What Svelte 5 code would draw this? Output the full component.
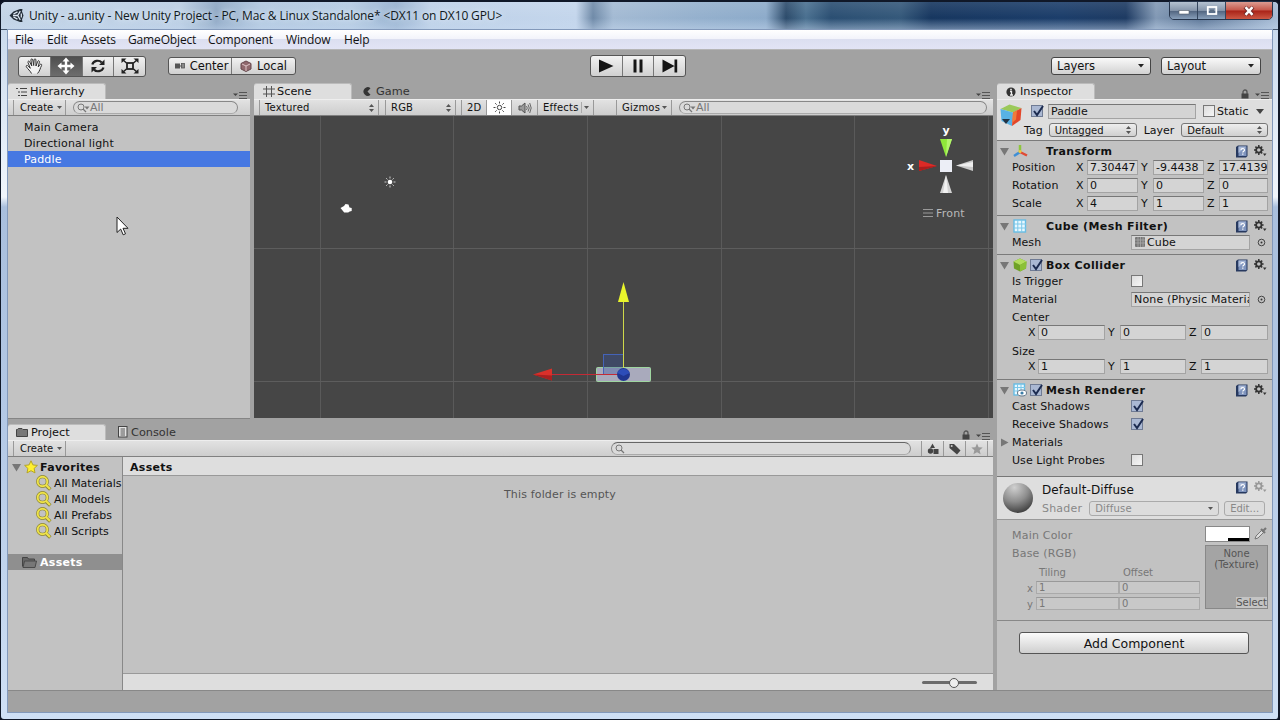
<script>
  const menus = [
    { name: 'File', width: 32 },
    { name: 'Edit', width: 34 },
    { name: 'Assets', width: 47 },
    { name: 'GameObject', width: 80 },
    { name: 'Component', width: 78 },
    { name: 'Window', width: 58 },
    { name: 'Help', width: 40 },
  ];

  const objects = ['Main Camera', 'Directional light', 'Paddle'];
  const favorites = ['All Materials', 'All Models', 'All Prefabs', 'All Scripts'];

  let selected = $state('Paddle');
  let tool = $state('move');

  const transform = [
    { label: 'Position', values: ['7.30447', '-9.4438', '17.4139'] },
    { label: 'Rotation', values: ['0', '0', '0'] },
    { label: 'Scale', values: ['4', '1', '1'] },
  ];
  const axes = ['X', 'Y', 'Z'];
  const gridX = [320.5, 453.5, 587.5, 721.5, 854.5, 988.5];
  const gridY = [248.5, 381.5];
</script>

{#snippet check(on)}
  <span class="check">
    {#if on}
      <svg width="13" height="14" viewBox="0 0 13 14"><path d="M3 7l3 4 6-9" fill="none" stroke="#1c2b50" stroke-width="2" /></svg>
    {/if}
  </span>
{/snippet}

{#snippet updown()}
  <svg class="updown" width="5" height="8" viewBox="0 0 5 8"><path d="M0 3L2.500 0 5 3zM0 5l2.500 3L5 5z" fill="#555" /></svg>
{/snippet}

{#snippet down()}
  <svg class="down" width="5" height="3" viewBox="0 0 5 3"><path d="M0 0h5L2.500 3z" fill="#555" /></svg>
{/snippet}

{#snippet paneMenu(lock)}
  <span class="pane-menu">
    {#if lock}
      <svg width="8" height="10" viewBox="0 0 8 10"><path d="M2 5V3a2 2 0 0 1 4 0v2" fill="none" stroke="#555" stroke-width="1.300" /><rect x="0.500" y="4.500" width="7" height="5" fill="#444" /></svg>
    {/if}
    <svg width="14" height="8" viewBox="0 0 14 8"><path d="M0 2.500h5L2.500 5z" fill="#444" /><path d="M6 1.500h8M6 4.500h8M6 7.500h8" stroke="#555" /></svg>
  </span>
{/snippet}

{#snippet search(text)}
  <span class="search">
    <svg width="13" height="10" viewBox="0 0 13 10"><circle cx="4" cy="4" r="3" fill="none" stroke="#777" /><path d="M6 6l3 3" stroke="#777" stroke-width="1.300" />{#if text}<path d="M7.500 3.500h5L10 6.500z" fill="#777" />{/if}</svg>
    {text}
  </span>
{/snippet}

{#snippet fold(open)}
  <svg class="fold" width="9" height="9" viewBox="0 0 9 9"><path d={open ? 'M0 1h9L4.500 8.500z' : 'M1 0.500l7.500 4L1 8.500z'} fill="#777" /></svg>
{/snippet}

{#snippet helpGear(dim)}
  <span class="help-gear">
    <svg width="13" height="13" viewBox="0 0 13 13"><path d="M1 2l2-1.500h9.500v10.500L11 12.500H1z" fill="#27395f" /><rect x="3.500" y="1.500" width="8" height="9.500" fill="#7f94bd" /><path d="M3.500 1.500h8L3.500 8z" fill="#a9b9d8" /><path d="M6 5c0-2 3.500-2 3.500 0 0 1.300-1.700 1-1.700 2.500M7.800 8.500v1.200" fill="none" stroke="#fff" stroke-width="1.200" /></svg>
    <svg class:dim width="13" height="12" viewBox="0 0 13 12"><circle cx="4.800" cy="5" r="2.700" fill="none" stroke="#333" stroke-width="1.800" /><path d="M4.800 0v2M4.800 8v2M0 5h2M7.600 5h2M1.400 1.600l1.300 1.300M6.900 7.100l1.300 1.300M8.200 1.600L6.900 2.900M2.700 7.100L1.400 8.400" stroke="#333" stroke-width="1.500" /><path d="M9 8.500h3.500L10.700 11z" fill="#333" /></svg>
  </span>
{/snippet}

{#snippet vector(values)}
  <div class="vector">
    {#each axes as axis, i}
      <span class="axis">{axis}</span><span class="field">{values[i]}</span>
    {/each}
  </div>
{/snippet}

{#snippet picker()}
  <svg class="picker" width="9" height="9" viewBox="0 0 9 9"><circle cx="4.500" cy="4.500" r="3.300" fill="none" stroke="#444" /><circle cx="4.500" cy="4.500" r="1" fill="#333" /></svg>
{/snippet}

<div class="window">
  <header class="titlebar">
    <svg class="logo" width="15" height="15" viewBox="0 0 15 15">
      <path d="M0.500 7.500L4.500 3.500 11 1l2.500 0-0.500 2.500L14.500 7.500 13 11.500l0.500 2.500-2.500 0L4.500 11.500z" fill="#222d38" />
      <path d="M4 7.500h4.700M8.700 7.500L11.300 3.200M8.700 7.500l2.600 4.300M4.500 6L8.500 3.900M4.500 9l4 2.100M12.300 5.500v4" stroke="#dde8f3" stroke-width="1.300" />
    </svg>
    <h1>Unity - a.unity - New Unity Project - PC, Mac &amp; Linux Standalone* &lt;DX11 on DX10 GPU&gt;</h1>
    <div class="controls">
      <span><svg width="12" height="9" viewBox="0 0 12 9"><rect x="1" y="4.500" width="10" height="3.500" fill="#fff" stroke="#56606c" stroke-width=".6" /></svg></span>
      <span><svg width="12" height="9" viewBox="0 0 12 9"><rect x="1.800" y="1" width="8.500" height="7" fill="none" stroke="#fff" stroke-width="1.800" /><rect x="4" y="3.500" width="4" height="2.500" fill="#5d6f85" /></svg></span>
      <span class="close"><svg width="12" height="10" viewBox="0 0 12 10"><path d="M2 1l8 8M10 1L2 9" stroke="#6b2525" stroke-width="4" /><path d="M2.500 1.200l7 7.600M9.500 1.200l-7 7.600" stroke="#fff" stroke-width="2.500" /></svg></span>
    </div>
  </header>

  <main class="client">
    <nav class="menubar">
      {#each menus as menu}
        <span style:width="{menu.width}px">{menu.name}</span>
      {/each}
    </nav>

    <div class="toolbar">
      <div class="group tools">
        <button class:active={tool === 'hand'} onclick={() => (tool = 'hand')} aria-label="hand">
          <svg width="18" height="18" viewBox="0 0 18 18"><path d="M6.500 16.500C5.500 14 2.500 12 1.300 9.700c-.5-1.300 1-1.800 1.900-.7L5.300 11.300 3 5.500c-.5-1.600 1.200-1.900 1.700-.6L6.800 9 5.900 3c0-1.500 1.700-1.500 1.900 0L8.700 8.500l.4-5.700c.2-1.400 1.800-1.200 1.800.2L11 9l1.700-4.600c.6-1.300 2-.7 1.700.7L13.200 10l1.900-2.500c.8-1 2 0 1.500 1-1.500 2.500-1.600 5.500-4.100 8" fill="#f2f2f2" stroke="#333" /></svg>
        </button>
        <button class:active={tool === 'move'} onclick={() => (tool = 'move')} aria-label="move">
          <svg width="18" height="18" viewBox="0 0 18 18"><path d="M9 0.500l3.500 4h-2.300v3.300h3.300V5.500l4 3.500-4 3.500v-2.300h-3.300v3.300h2.300L9 17.500l-3.500-4h2.300v-3.300H4.500v2.300L0.500 9l4-3.500v2.300h3.300V4.500H5.500z" fill="#fff" /></svg>
        </button>
        <button class:active={tool === 'rotate'} onclick={() => (tool = 'rotate')} aria-label="rotate">
          <svg width="18" height="16" viewBox="0 0 18 16"><path d="M3.300 6.500C4.500 2.500 10 1.500 12.700 4.500M14.500 9.500c-1.300 4-7 5-9.500 2" fill="none" stroke="#222" stroke-width="2.200" /><path d="M15.500 1.500v5.500H10zM2.500 14.500V9H8z" fill="#222" /></svg>
        </button>
        <button class:active={tool === 'scale'} onclick={() => (tool = 'scale')} aria-label="scale">
          <svg width="18" height="16" viewBox="0 0 18 16"><rect x="6" y="5" width="6" height="6" fill="none" stroke="#222" stroke-width="1.800" /><path d="M1.500 1.500l4 3.500M16.500 1.500l-4 3.500M1.500 14.500l4-3.500M16.500 14.500l-4-3.500" stroke="#222" stroke-width="1.500" /><path d="M0.500 0.500h5l-5 4.500zM17.500 0.500h-5l5 4.500zM0.500 15.500h5l-5-4.500zM17.500 15.500h-5l5-4.500z" fill="#222" /></svg>
        </button>
      </div>
      <div class="group pivot">
        <button><svg width="10" height="6" viewBox="0 0 10 6"><rect x="0" y="0.500" width="5" height="5" fill="#555" /><path d="M5 3h2" stroke="#555" /><rect x="6.500" y="0.500" width="3" height="4.500" fill="#888" stroke="#555" stroke-width=".8" /></svg>Center</button>
        <button><svg width="12" height="12" viewBox="0 0 12 12"><path d="M1 3.500L6 1l5 2.500v5.500L6 11.500 1 9z" fill="#90696d" stroke="#66484d" /><path d="M2 4l4 2 4-2M6 6v5" fill="none" stroke="#dec5c8" /></svg>Local</button>
      </div>
      <div class="group play">
        <button aria-label="play"><svg width="16" height="14" viewBox="0 0 16 14"><path d="M1 0.500L15.500 7 1 13.500z" fill="#151515" /></svg></button>
        <button aria-label="pause"><svg width="10" height="14" viewBox="0 0 10 14"><path d="M0.500 0.500h3v13h-3zM6.500 0.500h3v13h-3z" fill="#151515" /></svg></button>
        <button aria-label="step"><svg width="16" height="14" viewBox="0 0 16 14"><path d="M0.500 0.500L12.500 7 0.500 13.500zM12.500 0.500h2.700v13h-2.700z" fill="#151515" /></svg></button>
      </div>
      <div class="selects">
        <button>Layers<svg width="6" height="4" viewBox="0 0 6 4"><path d="M0 0h6L3 3.500z" fill="#222" /></svg></button>
        <button>Layout<svg width="6" height="4" viewBox="0 0 6 4"><path d="M0 0h6L3 3.500z" fill="#222" /></svg></button>
      </div>
    </div>

    <div class="workspace">
      <div class="left">
        <div class="upper">
          <section class="pane hierarchy">
            <div class="tabs">
              <span class="tab on"><svg width="12" height="10" viewBox="0 0 12 10"><path d="M0 1.500h2M4 1.500h7M2 5h2M5 5h6M2 8.500h2M5 8.500h6" stroke="#444" stroke-width="1.200" /></svg>Hierarchy</span>
              {@render paneMenu(false)}
            </div>
            <div class="bar">
              <span class="bar-item create">Create {@render down()}</span>
              {@render search('All')}
            </div>
            <ul class="tree">
              {#each objects as name}
                <li class:selected={selected === name}><button onclick={() => (selected = name)}>{name}</button></li>
              {/each}
            </ul>
          </section>

          <section class="pane scene">
            <div class="tabs">
              <span class="tab on"><svg width="12" height="11" viewBox="0 0 12 11"><path d="M3.500 0v11M8.500 0v11M0 3h12M0 8h12" stroke="#555" /></svg>Scene</span>
              <span class="tab game"><svg width="9" height="9" viewBox="0 0 9 9"><path d="M7.500 1.300A4.200 4.200 0 1 0 7.500 7.700L4.500 4.500z" fill="#333" /></svg>Game</span>
              {@render paneMenu(false)}
            </div>
            <div class="bar">
              <span class="bar-item shading">Textured {@render updown()}</span>
              <span class="bar-item channel">RGB {@render updown()}</span>
              <span class="bar-item twod">2D</span>
              <span class="bar-item sun"><svg width="13" height="13" viewBox="0 0 13 13"><circle cx="6.500" cy="6.500" r="2.200" fill="none" stroke="#444" /><path d="M6.500 0.500v2M6.500 10.500v2M0.500 6.500h2M10.500 6.500h2M2.200 2.200l1.400 1.400M9.400 9.400l1.400 1.400M10.800 2.200L9.400 3.600M3.600 9.400l-1.400 1.400" stroke="#444" /></svg></span>
              <span class="bar-item sound"><svg width="14" height="12" viewBox="0 0 14 12"><path d="M1 4h2.500L7 1v10L3.500 8H1z" fill="#999" stroke="#555" /><path d="M8.500 4q1.500 2 0 4M10 2.500q2.500 3.500 0 7M11.700 1q3 5 0 10" fill="none" stroke="#666" /></svg></span>
              <span class="bar-item effects">Effects <i></i>{@render down()}</span>
              <span class="bar-item gizmos">Gizmos {@render down()}</span>
              {@render search('All')}
            </div>
            <svg class="viewport" width="739" height="302" viewBox="254 116 739 302">
              <rect x="254" y="116" width="739" height="302" fill="#464646" />
              {#each gridX as x}
                <path d="M{x} 116v302" stroke="#5a5a5a" />
              {/each}
              {#each gridY as y}
                <path d="M254 {y}h739" stroke="#5d5d5d" />
              {/each}
              <circle cx="390" cy="182" r="2.300" fill="#fff" />
              <path d="M390 176.500v2M390 185.500v2M384.500 182h2M393.500 182h2M386.200 178.200l1.300 1.300M392.500 184.500l1.300 1.300M393.800 178.200l-1.300 1.300M387.500 184.500l-1.300 1.300" stroke="#ccc" />
              <path d="M340.500 208l3.500-2 1.500-2 3 .5 1 3 2.200.5v3l-2 .5-1.500 1h-4z" fill="#fff" />
              <!-- move gizmo on the paddle -->
              <rect x="596.500" y="367.500" width="54" height="14" rx="1" fill="#a9aabc" stroke="#9fd6a0" />
              <rect x="603.500" y="354.500" width="20" height="20" fill="#3550a0" fill-opacity=".35" stroke="#4463b8" />
              <path d="M552 374.500h66" stroke="#c42a35" />
              <path d="M623.500 302v66" stroke="#cfd84a" />
              <path d="M533 374.500l19-6v12z" fill="#d9302a" />
              <path d="M533 374.500l19 1v5z" fill="#a82020" />
              <path d="M623.500 282l5.500 20h-11z" fill="#e9f52b" />
              <circle cx="623.500" cy="374.500" r="6.500" fill="#20368f" />
              <path d="M617.500 373a6.500 6.500 0 0 1 12 0l-6 3z" fill="#2d4db8" />
              <!-- orientation gizmo -->
              <rect x="940" y="160" width="12" height="12" fill="#eceef6" />
              <path d="M940 139h12l-6 18z" fill="#8fe83a" />
              <path d="M947 139h5l-6 18z" fill="#b3f56c" />
              <path d="M919 160v11l18-5z" fill="#dc2a26" />
              <path d="M919 167l18-1-18 5z" fill="#aa1d1d" />
              <path d="M973 160v11l-17-5.500z" fill="#c9c9c9" />
              <path d="M973 162v5l-17-1.500z" fill="#eee" />
              <path d="M946 175l6 18h-12z" fill="#d2d2d2" />
              <path d="M946 175l2 18h-5z" fill="#f1f1f1" />
              <text x="942.500" y="134" class="axis-name">y</text>
              <text x="907" y="170" class="axis-name">x</text>
              <path d="M923 209.500h10M923 213h10M923 216.500h10" stroke="#999" />
              <text x="936" y="217" class="view-name">Front</text>
            </svg>
          </section>
        </div>

        <section class="pane project">
          <div class="tabs">
            <span class="tab on"><svg width="12" height="9" viewBox="0 0 12 9"><path d="M0.500 8.500v-7h1l.8-1H6l1 1h4.500v7z" fill="#777" stroke="#444" /></svg>Project</span>
            <span class="tab console"><svg width="10" height="12" viewBox="0 0 10 12"><rect x="0.500" y="0.500" width="8.500" height="10.500" fill="#e3e3e3" stroke="#444" /><path d="M2.500 3h4.500M2.500 5h4.500M2.500 7h4.500M2.500 9h4.500" stroke="#555" /></svg>Console</span>
            {@render paneMenu(true)}
          </div>
          <div class="bar">
            <span class="bar-item create">Create {@render down()}</span>
            {@render search('')}
            <span class="bar-item filter"><svg width="12" height="12" viewBox="0 0 12 12"><path d="M5.500 0.500l2.500 4.500H3z" fill="#444" /><circle cx="3.500" cy="8" r="2.700" fill="#444" /><rect x="6.500" y="6" width="5" height="5" fill="#444" /></svg></span>
            <span class="bar-item filter"><svg width="12" height="12" viewBox="0 0 12 12"><path d="M0.500 1h4.500l6.500 6.500L8 11.500 0.500 5z" fill="#444" /><circle cx="2.700" cy="3" r="1" fill="#ccc" /></svg></span>
            <span class="bar-item filter last"><svg width="12" height="12" viewBox="0 0 12 12"><path d="M6 0.500l1.600 3.800 4.100.3-3.100 2.700 1 4L6 9.200 2.400 11.300l1-4L.3 4.600l4.100-.3z" fill="#999" /></svg></span>
          </div>
          <div class="browser">
            <div class="folders">
              <div class="folder-row root">
                {@render fold(true)}
                <svg width="14" height="14" viewBox="0 0 14 14"><path d="M7 0.800l1.900 4.100 4.500.5-3.300 3 .9 4.500L7 10.700l-4 2.200.9-4.500-3.300-3 4.500-.5z" fill="#fff031" stroke="#b5a526" /></svg>
                <b>Favorites</b>
              </div>
              {#each favorites as name}
                <div class="folder-row fav">
                  <svg width="17" height="16" viewBox="0 0 17 16"><circle cx="7.500" cy="6.500" r="4.800" fill="none" stroke="#8b8531" stroke-width="3.200" /><path d="M11 10.500l4.300 4" stroke="#8b8531" stroke-width="3.600" /><circle cx="7.500" cy="6.500" r="4.800" fill="none" stroke="#eee24a" stroke-width="1.900" /><path d="M11 10l4 4" stroke="#eee24a" stroke-width="2.200" /></svg>
                  {name}
                </div>
              {/each}
              <div class="folder-row assets">
                <svg width="15" height="12" viewBox="0 0 15 12"><path d="M0.500 10.500v-9h5l1 1.500h6v2" fill="#666" stroke="#444" /><path d="M2.500 5h12l-1.500 6.500h-12z" fill="#777" stroke="#4a4a4a" /></svg>
                <b>Assets</b>
              </div>
            </div>
            <div class="contents">
              <div class="crumb">Assets</div>
              <p>This folder is empty</p>
              <div class="zoom"><span class="track"><span class="knob"></span></span></div>
            </div>
          </div>
        </section>
      </div>

      <section class="pane inspector">
        <div class="tabs">
          <span class="tab on"><svg width="10" height="10" viewBox="0 0 10 10"><circle cx="5" cy="5" r="4.600" fill="#333" /><path d="M4 4.500h1.500V8M4 8h3" fill="none" stroke="#eee" stroke-width="1.300" /><rect x="4.200" y="1.800" width="1.600" height="1.500" fill="#eee" /></svg>Inspector</span>
          {@render paneMenu(true)}
        </div>

        <div class="object-head">
          <svg class="cube" width="24" height="24" viewBox="0 0 24 24"><path d="M0.500 5l9-4.500L21.500 4l-8.500 4.500z" fill="#9bc95a" /><path d="M0.500 5L13 8.500 12 22 1.500 17z" fill="#58b2e4" /><path d="M13 8.500L21.500 4l-1 12L12 22z" fill="#e3472a" /><path d="M13 8.500l4-2-1 9-3.500 3z" fill="#f07b3a" /><path d="M2 15h8l-4 5z" fill="#234" /></svg>
          <div class="head-rows">
            <div class="head-row name-row">
              {@render check(true)}
              <span class="field name">Paddle</span>
              {@render check(false)}
              <span class="static">Static</span>
              <svg width="8" height="5" viewBox="0 0 8 5"><path d="M0 0h8L4 5z" fill="#444" /></svg>
            </div>
            <div class="head-row tag-row">
              <span>Tag</span>
              <span class="popup tag">Untagged {@render updown()}</span>
              <span>Layer</span>
              <span class="popup layer">Default {@render updown()}</span>
            </div>
          </div>
        </div>

        <div class="component transform">
          <div class="component-head">
            {@render fold(true)}
            <svg width="15" height="14" viewBox="0 0 15 14"><path d="M7 8V1" stroke="#8fc63d" stroke-width="2.500" /><path d="M7 8l-6 4" stroke="#3f8fd6" stroke-width="2.500" /><path d="M7 8l7 3.500" stroke="#e04a34" stroke-width="2.500" /><circle cx="7" cy="7.500" r="1.600" fill="#eec940" /></svg>
            <h2>Transform</h2>
            {@render helpGear(false)}
          </div>
          {#each transform as row}
            <div class="row"><span class="label">{row.label}</span>{@render vector(row.values)}</div>
          {/each}
        </div>

        <div class="component mesh">
          <div class="component-head">
            {@render fold(true)}
            <svg width="14" height="14" viewBox="0 0 14 14"><rect x="1" y="1" width="11.500" height="12" fill="#e8f8ff" stroke="#66bce4" stroke-width="1.400" /><path d="M4.800 1v12M8.700 1v12M1 5h12M1 9h12" stroke="#7cc8ea" /></svg>
            <h2>Cube (Mesh Filter)</h2>
            {@render helpGear(false)}
          </div>
          <div class="row">
            <span class="label">Mesh</span>
            <span class="field object"><svg width="10" height="10" viewBox="0 0 10 10"><rect width="10" height="10" rx="1" fill="#777" /><path d="M3 0v10M5.500 0v10M8 0v10M0 3h10M0 6h10" stroke="#aaa" stroke-width=".8" /></svg>Cube</span>
            {@render picker()}
          </div>
        </div>

        <div class="component collider">
          <div class="component-head">
            {@render fold(true)}
            <svg width="14" height="14" viewBox="0 0 14 14"><path d="M0.500 3.500L7 0.500l6.500 3-.5 7L7 13.500l-6-3z" fill="#6fa127" /><path d="M0.500 3.500L7 0.500l6.500 3L7 7z" fill="#b2dd5e" /><path d="M7 7l6.500-3.500-.5 7-6 3z" fill="#8cc137" /></svg>
            {@render check(true)}
            <h2>Box Collider</h2>
            {@render helpGear(false)}
          </div>
          <div class="row"><span class="label">Is Trigger</span>{@render check(false)}</div>
          <div class="row"><span class="label">Material</span><span class="field object">None (Physic Material)</span>{@render picker()}</div>
          <div class="row short"><span class="label">Center</span></div>
          <div class="wide">{@render vector(['0', '0', '0'])}</div>
          <div class="row short spaced"><span class="label">Size</span></div>
          <div class="wide">{@render vector(['1', '1', '1'])}</div>
        </div>

        <div class="component renderer">
          <div class="component-head">
            {@render fold(true)}
            <svg width="14" height="14" viewBox="0 0 14 14"><rect x="1" y="1" width="10.500" height="11" fill="#e8f8ff" stroke="#66bce4" stroke-width="1.400" /><path d="M4.500 1v11M8 1v11M1 4.500h11M1 8h11" stroke="#7cc8ea" /><ellipse cx="9" cy="10" rx="4.500" ry="3" fill="#fff" stroke="#678" /><circle cx="9" cy="10" r="1.600" fill="#3c7ea8" /></svg>
            {@render check(true)}
            <h2>Mesh Renderer</h2>
            {@render helpGear(false)}
          </div>
          <div class="row"><span class="label">Cast Shadows</span>{@render check(true)}</div>
          <div class="row"><span class="label">Receive Shadows</span>{@render check(true)}</div>
          <div class="row foldout">{@render fold(false)}<span class="label">Materials</span></div>
          <div class="row"><span class="label">Use Light Probes</span>{@render check(false)}</div>
        </div>

        <div class="material-head">
          <span class="sphere"></span>
          <div class="material-rows">
            <div class="material-title">Default-Diffuse {@render helpGear(true)}</div>
            <div class="material-shader">
              <span>Shader</span>
              <span class="popup">Diffuse {@render down()}</span>
              <span class="popup edit">Edit...</span>
            </div>
          </div>
        </div>

        <div class="material-body">
          <div class="props">
            <div class="prop">Main Color</div>
            <div class="prop">Base (RGB)</div>
            <div class="heads"><span>Tiling</span><span>Offset</span></div>
            <div class="uv"><em>x</em><span class="field">1</span><span class="field">0</span></div>
            <div class="uv"><em>y</em><span class="field">1</span><span class="field">0</span></div>
          </div>
          <div class="slot">
            <div class="color">
              <span class="swatch"><i></i></span>
              <svg width="14" height="14" viewBox="0 0 14 14"><path d="M1 13l1-3 5.500-5.500 2 2L4 12z" fill="#ddd" stroke="#777" /><path d="M7 3l4 4M8.500 5.500L12 2" stroke="#777" stroke-width="2.200" /></svg>
            </div>
            <div class="texture"><span>None<br />(Texture)</span><b>Select</b></div>
          </div>
        </div>

        <button class="add">Add Component</button>
      </section>
    </div>

    <footer class="status"></footer>
  </main>

  <svg class="cursor" width="13" height="20" viewBox="0 0 13 20"><path d="M1 1v15.500l3.700-3.400 2.500 5.700 2.300-1-2.500-5.500H12z" fill="#fff" stroke="#222" /></svg>
</div>

<style>
  :global(body) {
    overflow: hidden;
    background: #0a1020;
  }

  * {
    box-sizing: border-box;
  }

  .window {
    position: relative;
    width: 1280px;
    height: 720px;
    border: 1px solid #101828;
    border-width: 2px 2px 1px 1px;
    border-radius: 6px 6px 4px 4px;
    padding: 0 6px 7px 7px;
    background: linear-gradient(#c3d5ea, #e7eff9 150px, #f0f5fb 195px, #a9bfdd 205px, #b4c9e6 60%, #cfe0f5);
    font-family: 'DejaVu Sans', Verdana, sans-serif;
    font-size: 11px;
    color: #111;
  }

  svg {
    display: block;
    flex: none;
  }

  button {
    font: inherit;
    color: inherit;
    padding: 0;
    border: 0;
    background: none;
  }

  h1, h2, p, ul {
    margin: 0;
    padding: 0;
  }

  .titlebar {
    height: 28px;
    margin: 0 -6px 0 -7px;
    padding-left: 8px;
    display: flex;
    align-items: center;
    border-radius: 5px 5px 0 0;
    background:
      linear-gradient(rgba(255, 255, 255, .1), transparent 60%, rgba(200, 218, 240, .45)),
      linear-gradient(90deg, #c3d4e6, #b9cde3 180px, #8ca6c3 215px, #b0c7e0 260px, #b3cae2 350px, #95b0cf 395px, #bed1e8 430px, #c4d6ec 575px, #6f8aa8 592px, #a3bad3 612px, #94b0cd 700px, #8dabca 765px, #2c4b6b 785px, #4a7090 805px, #2a4e72 830px, #34587a 900px, #16365f 930px, #1b3d6a 1060px, #1d3a62 1125px, #8299b5 1155px, #5b7596 1200px, #a8bdd6);
    border-bottom: 1px solid #43546a;
  }

  h1 {
    margin-left: 5px;
    flex: 1;
    font: 12px/14px 'Open Sans', 'Noto Sans', sans-serif;
    letter-spacing: -.13px;
    color: #101820;
    text-shadow: 0 0 5px #dfeaf5, 0 0 8px #dfeaf5;
    white-space: nowrap;
  }

  .controls {
    display: flex;
    align-self: flex-start;
    height: 19px;
    margin-right: 5px;
    margin-top: -1px;
    border: 1px solid #26354c;
    border-radius: 0 0 5px 5px;
    overflow: hidden;
  }

  .controls span {
    width: 28px;
    display: grid;
    place-items: center;
    border-right: 1px solid #34465e;
    background: linear-gradient(#b5c2d1, #8595aa 50%, #50637e 52%, #889fba);
  }

  .controls .close {
    width: 46px;
    border: 0;
    background: linear-gradient(#dc9c91, #c5574a 48%, #a92318 52%, #cc5844);
  }

  .client {
    height: 682px;
    display: flex;
    flex-direction: column;
    background: #a2a2a2;
    box-shadow: 0 0 0 1px #8399ba;
  }

  .menubar {
    height: 20px;
    padding: 0 0 0 7px;
    display: flex;
    align-items: center;
    background: linear-gradient(#fff, #f3f4fb 45%, #dcdff0 50%, #e2e4f5);
    border-bottom: 1px solid #b5b5b5;
    font: 12px/18px 'Open Sans', 'Noto Sans', sans-serif;
    letter-spacing: -.15px;
  }

  .toolbar {
    height: 33px;
    padding: 0 11px 1px 10px;
    display: flex;
    align-items: center;
  }

  .group {
    display: flex;
    height: 21px;
    border: 1px solid #555;
    border-radius: 3px;
    background: linear-gradient(#f2f2f2, #d0d0d0);
    font-size: 11.500px;
  }

  .group button {
    display: flex;
    align-items: center;
    justify-content: center;
    gap: 5px;
    border-right: 1px solid #777;
  }

  .group button:last-child {
    border-right: 0;
  }

  .tools {
    width: 128px;
  }

  .tools button,
  .play button {
    flex: 1;
  }

  .tools .active {
    background: linear-gradient(#4f4f4f, #6d6d6d);
  }

  .pivot {
    width: 128px;
    margin-left: 22px;
    height: 18px;
  }

  .pivot button {
    width: 64px;
    padding-left: 3px;
  }

  .pivot button:last-child {
    padding-left: 0;
  }

  .play {
    width: 96px;
    margin-left: 294px;
    height: 22px;
  }

  .selects {
    margin-left: auto;
    display: flex;
    gap: 10px;
  }

  .selects button {
    width: 100px;
    height: 18px;
    padding: 0 6px 0 5px;
    display: flex;
    align-items: center;
    justify-content: space-between;
    border: 1px solid #444;
    border-radius: 3px;
    background: linear-gradient(#fafafa, #d2d2d2);
    font-size: 11.500px;
  }

  .workspace {
    height: 607px;
    display: grid;
    grid-template-columns: 985px 275px;
    gap: 4px;
  }

  .left {
    display: grid;
    grid-template-rows: 335px 266px;
    gap: 6px;
  }

  .upper {
    display: grid;
    grid-template-columns: 242px 739px;
    gap: 4px;
  }

  .pane {
    display: flex;
    flex-direction: column;
    background: #c2c2c2;
    min-width: 0;
  }

  .hierarchy,
  .project,
  .inspector {
    box-shadow: 0 1px 0 #858585;
  }

  .tabs {
    height: 16px;
    display: flex;
    background: #a2a2a2;
    font-size: 11.300px;
  }

  .tab {
    display: flex;
    align-items: center;
    gap: 4px;
    padding-left: 10px;
    color: #333;
  }

  .tab.on {
    width: 98px;
    padding-left: 9px;
    border-radius: 3px 3px 0 0;
    border: solid #bbb;
    border-width: 1px 1px 0 0;
    background: #dedede;
    color: #111;
  }

  .hierarchy .tab.on {
    padding-left: 8px;
    gap: 2px;
  }

  .scene .tab.on {
    gap: 2px;
  }

  .scene .game {
    padding-left: 11px;
    gap: 4px;
  }

  .project .console {
    padding-left: 12px;
    gap: 3px;
  }

  .pane-menu {
    margin: 7px 3px 0 auto;
    display: flex;
    align-items: flex-end;
    gap: 6px;
    height: 9px;
  }

  .bar {
    height: 17px;
    display: flex;
    align-items: center;
    padding-left: 5px;
    border-top: 1px solid #eee;
    border-bottom: 1px solid #808080;
    background: linear-gradient(#e2e2e2, #cdcdcd);
  }

  .bar-item {
    height: 100%;
    display: flex;
    align-items: center;
    justify-content: space-between;
    padding: 0 4px 0 5px;
    border: solid #999;
    border-width: 0 1px 0 0;
    font-size: 10px;
    letter-spacing: .2px;
  }

  .create {
    width: 53px;
    border-left-width: 1px;
    padding: 0 3px 0 6px;
    letter-spacing: 0;
  }

  .search {
    flex: 1;
    height: 13px;
    margin: 0 12px 0 7px;
    padding-left: 3px;
    display: flex;
    align-items: center;
    border: 1px solid #888;
    border-bottom-color: #aaa;
    border-radius: 7px;
    background: #dadada;
    color: #777;
  }

  .tree {
    padding-top: 3px;
    list-style: none;
  }

  .tree li {
    height: 16px;
    padding: 1px 0 0 16px;
    line-height: 15px;
    letter-spacing: .15px;
  }

  .tree button {
    display: block;
    letter-spacing: inherit;
  }

  .tree .selected {
    background: #4678e2;
    color: #fff;
  }

  .shading {
    width: 120px;
    border-left-width: 1px;
  }

  .channel {
    width: 71px;
    margin-left: 6px;
    border-left-width: 1px;
  }

  .twod {
    width: 26px;
    margin-left: 5px;
    border-left-width: 1px;
  }

  .sun,
  .sound {
    width: 25px;
    padding: 0;
    justify-content: center;
  }

  .sun {
    background: #fff;
  }

  .sound {
    width: 26px;
  }

  .effects {
    width: 56px;
    gap: 2px;
  }

  .effects i {
    height: 11px;
    border-left: 1px solid #aaa;
  }

  .gizmos {
    width: 56px;
    margin-left: 22px;
    border-left-width: 1px;
  }

  .scene .search {
    margin: 0 6px 0 7px;
  }

  .axis-name {
    font: bold 11px 'DejaVu Sans', sans-serif;
    fill: #fff;
  }

  .view-name {
    font: 11px 'DejaVu Sans', sans-serif;
    letter-spacing: .2px;
    fill: #b9b9b9;
  }

  .project .tab.on {
    padding-left: 8px;
    gap: 3px;
  }

  .project .search {
    margin: 0 10px 0 545px;
    border-color: #666 #888 #aaa;
  }

  .filter {
    width: 22px;
    padding: 0;
    justify-content: center;
    border-width: 0 0 0 1px;
  }

  .last {
    width: 23px;
    margin-right: 5px;
    border-right-width: 1px;
  }

  .browser {
    flex: 1;
    display: grid;
    grid-template-columns: 115px 1fr;
  }

  .folders {
    padding-top: 2px;
    border-right: 1px solid #888;
    overflow: hidden;
  }

  .folder-row {
    height: 16px;
    display: flex;
    align-items: center;
    white-space: nowrap;
  }

  .folder-row b,
  .crumb {
    font-size: 11px;
    font-weight: bold;
    letter-spacing: .3px;
  }

  .root {
    padding-left: 4px;
    gap: 3px;
  }

  .root b {
    margin-left: -1px;
  }

  .fav {
    padding-left: 27px;
    gap: 2px;
  }

  .assets {
    margin-top: 15px;
    padding-left: 14px;
    gap: 3px;
    background: #8f8f8f;
    color: #fff;
  }

  .contents {
    display: flex;
    flex-direction: column;
  }

  .crumb {
    height: 19px;
    padding: 3px 0 0 7px;
    border-bottom: 1px solid #999;
    background: #dedede;
    line-height: 15px;
  }

  .contents p {
    flex: 1;
    padding-top: 12px;
    padding-left: 4px;
    text-align: center;
    color: #555;
    letter-spacing: .15px;
  }

  .zoom {
    height: 17px;
    padding: 7px 16px 0 0;
    display: flex;
    justify-content: flex-end;
    border-top: 1px solid #999;
    background: #dedede;
  }

  .track {
    width: 55px;
    height: 3px;
    display: flex;
    align-items: center;
    justify-content: center;
    border-radius: 2px;
    background: #6b6b6b;
  }

  .knob {
    width: 10px;
    height: 10px;
    margin-left: 8px;
    border: 1px solid #555;
    border-radius: 50%;
    background: #eee;
  }

  .object-head {
    height: 41px;
    padding: 3px 0 0 3px;
    display: flex;
    border-top: 1px solid #eee;
    background: #dedede;
  }

  .cube {
    margin-top: 1px;
  }

  .head-rows {
    flex: 1;
  }

  .head-row {
    display: flex;
    align-items: center;
  }

  .name-row {
    height: 16px;
    padding-left: 7px;
  }

  .name {
    width: 148px;
    margin-left: 5px;
    margin-right: 7px;
  }

  .static {
    margin: 0 8px 0 2px;
  }

  .tag-row {
    height: 22px;
    padding-right: 5px;
    justify-content: flex-end;
    gap: 7px;
  }

  .popup {
    width: 87px;
    height: 14px;
    padding: 0 5px;
    display: flex;
    align-items: center;
    justify-content: space-between;
    border: 1px solid #777;
    border-radius: 3px;
    background: linear-gradient(#eee, #d0d0d0);
    font-size: 10px;
  }

  .tag {
    width: 88px;
    margin-left: -1px;
  }

  .check {
    width: 12px;
    height: 12px;
    flex: none;
    border: 1px solid #777;
    background: linear-gradient(135deg, #ddd, #f6f6f6);
  }

  .check:has(svg) {
    background: #aab8d3;
    border-color: #6f7b94;
  }

  .check svg {
    margin: -2px -1px;
  }

  .field {
    height: 15px;
    padding-left: 2px;
    display: block;
    border: 1px solid #a3a3a3;
    border-top-color: #777;
    background: #d4d4d4;
    line-height: 13px;
    overflow: hidden;
    white-space: nowrap;
  }

  .component {
    padding: 1px 4px 0 3px;
    border-top: 1px solid #7b7b7b;
  }

  .component-head {
    height: 16px;
    display: grid;
    grid-template-columns: 13px 17px 16px 1fr auto;
    align-items: center;
  }

  h2 {
    grid-column: 4;
    padding-top: 2px;
    font-size: 11px;
    line-height: 16px;
    letter-spacing: .4px;
    white-space: nowrap;
  }

  .help-gear {
    display: flex;
    gap: 6px;
    margin-right: 1px;
  }

  .dim {
    opacity: .4;
  }

  .transform {
    height: 75px;
  }

  .mesh {
    height: 39px;
  }

  .collider {
    height: 125px;
  }

  .renderer {
    height: 97px;
  }

  .row {
    height: 18px;
    padding-left: 12px;
    display: flex;
    align-items: center;
    white-space: nowrap;
  }

  .label {
    width: 119px;
    flex: none;
    letter-spacing: .05px;
  }

  .transform .label {
    width: 62px;
  }

  .short {
    height: 17px;
  }

  .short .label {
    padding-top: 1px;
  }

  .spaced {
    margin-top: 1px;
  }

  .vector {
    flex: 1;
    display: grid;
    grid-template-columns: 13px 51px 15px 51px 15px 49px;
    align-items: center;
  }

  .axis {
    padding-left: 2px;
  }

  .vector .axis:nth-of-type(n + 3) {
    padding-left: 3px;
  }

  .wide {
    height: 16px;
    padding-left: 26px;
  }

  .wide .vector {
    grid-template-columns: 12px 67px 15px 66px 15px 67px;
  }

  .object {
    width: 119px;
    margin-right: 7px;
    font-size: 11px;
    letter-spacing: .15px;
  }

  .object svg {
    display: inline-block;
    margin: 0 2px 0 1px;
    vertical-align: -1px;
  }

  .foldout {
    padding-left: 0;
    gap: 3px;
  }

  .material-head {
    height: 44px;
    display: flex;
    padding: 4px 5px 0;
    border: solid #777;
    border-width: 1px 0;
    background: #dedede;
    border-bottom-color: #999;
  }

  .sphere {
    width: 30px;
    height: 30px;
    margin: 2px 0 0 1px;
    border-radius: 50%;
    background: radial-gradient(circle at 38% 15%, #d0d0d0, #8d8d8d 45%, #444 80%, #2c2c2c);
  }

  .material-rows {
    flex: 1;
    padding-left: 9px;
  }

  .material-title {
    height: 17px;
    display: flex;
    justify-content: space-between;
    font-size: 12px;
    line-height: 18px;
    letter-spacing: .1px;
  }

  .material-title .help-gear {
    margin-right: 0;
  }

  .material-shader {
    display: flex;
    align-items: center;
    gap: 7px;
    padding-top: 3px;
    color: #888;
    letter-spacing: .2px;
  }

  .material-shader .popup {
    width: 130px;
    height: 15px;
    border-color: #aaa;
    background: #dcdcdc;
  }

  .material-shader .edit {
    width: 41px;
    margin-left: -2px;
    padding-right: 2px;
    letter-spacing: 0;
  }

  .material-body {
    height: 101px;
    display: flex;
    padding: 6px 4px 0 0;
    border-bottom: 1px solid #888;
    color: #777;
  }

  .props {
    width: 204px;
    margin-right: 4px;
  }

  .prop {
    height: 18px;
    padding-left: 15px;
    line-height: 19px;
    letter-spacing: .2px;
  }

  .heads {
    height: 19px;
    padding-left: 42px;
    display: grid;
    grid-template-columns: 84px 1fr;
    line-height: 21px;
    font-size: 10px;
  }

  .uv {
    height: 16px;
    padding-left: 30px;
    display: grid;
    grid-template-columns: 9px 83px 81px;
    font-size: 10px;
  }

  .uv em {
    font-style: normal;
    line-height: 16px;
  }

  .uv .field {
    height: 13px;
    background: #c8c8c8;
    border-color: #999 #aaa #aaa;
    line-height: 12px;
  }

  .slot {
    width: 63px;
  }

  .color {
    height: 19px;
    display: flex;
    gap: 4px;
  }

  .swatch {
    width: 45px;
    height: 16px;
    display: flex;
    align-items: flex-end;
    justify-content: flex-end;
    border: 1px solid #888;
    background: #fff;
  }

  .swatch i {
    width: 50%;
    height: 3px;
    background: #000;
  }

  .texture {
    height: 64px;
    display: flex;
    flex-direction: column;
    justify-content: space-between;
    border: 1px solid #888;
    background: #a4a4a4;
    font-size: 10px;
    line-height: 11px;
    text-align: center;
    color: #555;
    padding-top: 2px;
  }

  .texture b {
    align-self: flex-end;
    background: #c4c4c4;
    font-weight: normal;
  }

  .add {
    width: 230px;
    height: 22px;
    margin: 11px 0 0 22px;
    border: 1px solid #555;
    border-radius: 3px;
    background: linear-gradient(#fbfbfb, #cfcfcf);
    font-size: 12.500px;
  }

  .status {
    flex: 1;
    border-top: 1px solid #888;
  }

  .cursor {
    position: absolute;
    left: 115px;
    top: 214px;
  }
</style>
